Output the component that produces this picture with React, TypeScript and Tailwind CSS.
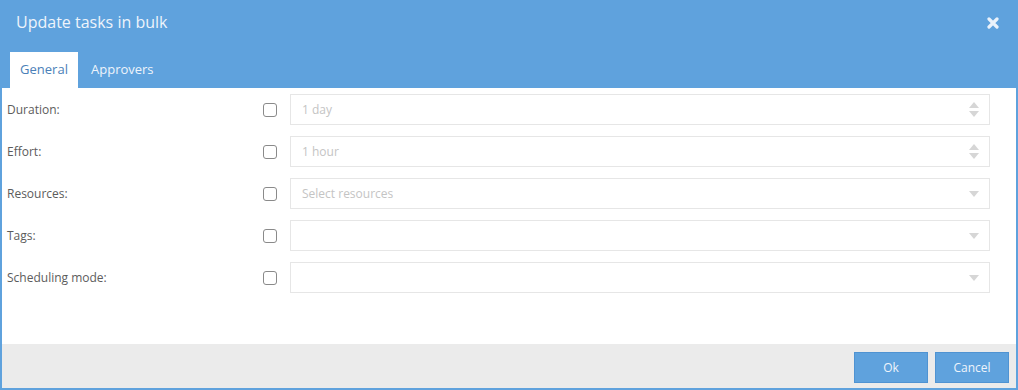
type Row = { label: string; placeholder: string; kind: 'spin' | 'select' }

const ROWS: Row[] = [
  { label: 'Duration:', placeholder: '1 day', kind: 'spin' },
  { label: 'Effort:', placeholder: '1 hour', kind: 'spin' },
  { label: 'Resources:', placeholder: 'Select resources', kind: 'select' },
  { label: 'Tags:', placeholder: '', kind: 'select' },
  { label: 'Scheduling mode:', placeholder: '', kind: 'select' },
]

function Caret({ up }: { up?: boolean }) {
  return (
    <svg width="10" height="6" viewBox="0 0 10 6" className="block">
      {up ? <path d="M0 6 L5 0 L10 6 Z" fill="#d6d6d6" /> : <path d="M0 0 L10 0 L5 6 Z" fill="#d6d6d6" />}
    </svg>
  )
}

export default function App() {
  return (
    <div
      className="w-[1018px] h-[390px] bg-[#5fa2dd] flex flex-col px-[2px] pb-[2px] text-[#555]"
      style={{ fontFamily: '"Open Sans", "Liberation Sans", sans-serif' }}
    >
      {/* header */}
      <div className="h-[52px] flex items-center justify-between pl-[14px] pr-[17px] shrink-0">
        <h1 className="text-[16px] text-[#eef4fb] leading-none -mt-[8px]">Update tasks in bulk</h1>
        <svg width="12" height="12" viewBox="0 0 12 12" className="-mt-[7px]">
          <path d="M2 2 L10 10 M10 2 L2 10" stroke="#eaf2fb" strokeWidth="3.2" strokeLinecap="round" />
        </svg>
      </div>

      {/* tabs */}
      <div className="h-[36px] flex items-stretch pl-[8px] shrink-0">
        <div className="w-[68px] bg-white flex items-center justify-center text-[13px] text-[#4a80b8]">General</div>
        <div className="px-[13px] flex items-center text-[13px] text-[#eef4fb]">Approvers</div>
      </div>

      {/* body */}
      <div className="flex-1 bg-white flex flex-col">
        <div className="flex-1 flex flex-col gap-[11px] pt-[6px]">
          {ROWS.map(r => (
            <div key={r.label} className="flex items-center h-[31px]">
              <div className="w-[254px] pl-[5px] text-[12px] text-[#5c5c5c]">{r.label}</div>
              <div className="w-[34px] flex items-center">
                <div className="w-[14px] h-[14px] rounded-[3px] border-[1.5px] border-[#8a8a8a] ml-[7px]" />
              </div>
              <div className="w-[700px] h-[31px] border border-[#e6e6e6] flex items-center justify-between pl-[11px] pr-[10px]">
                <span className="text-[12px] text-[#c4c4c4]">{r.placeholder}</span>
                {r.kind === 'spin' ? (
                  <div className="flex flex-col gap-[3px]">
                    <Caret up />
                    <Caret />
                  </div>
                ) : (
                  <Caret />
                )}
              </div>
            </div>
          ))}
        </div>

        {/* footer */}
        <div className="h-[44px] bg-[#ebebeb] flex items-center justify-end gap-[7px] pr-[7px] pt-[3px] shrink-0">
          <button className="w-[74px] h-[31px] bg-[#5fa2dd] border border-[#4f93d2] text-[12px] text-[#eef4fb]">Ok</button>
          <button className="w-[74px] h-[31px] bg-[#5fa2dd] border border-[#4f93d2] text-[12px] text-[#eef4fb]">Cancel</button>
        </div>
      </div>
    </div>
  )
}
